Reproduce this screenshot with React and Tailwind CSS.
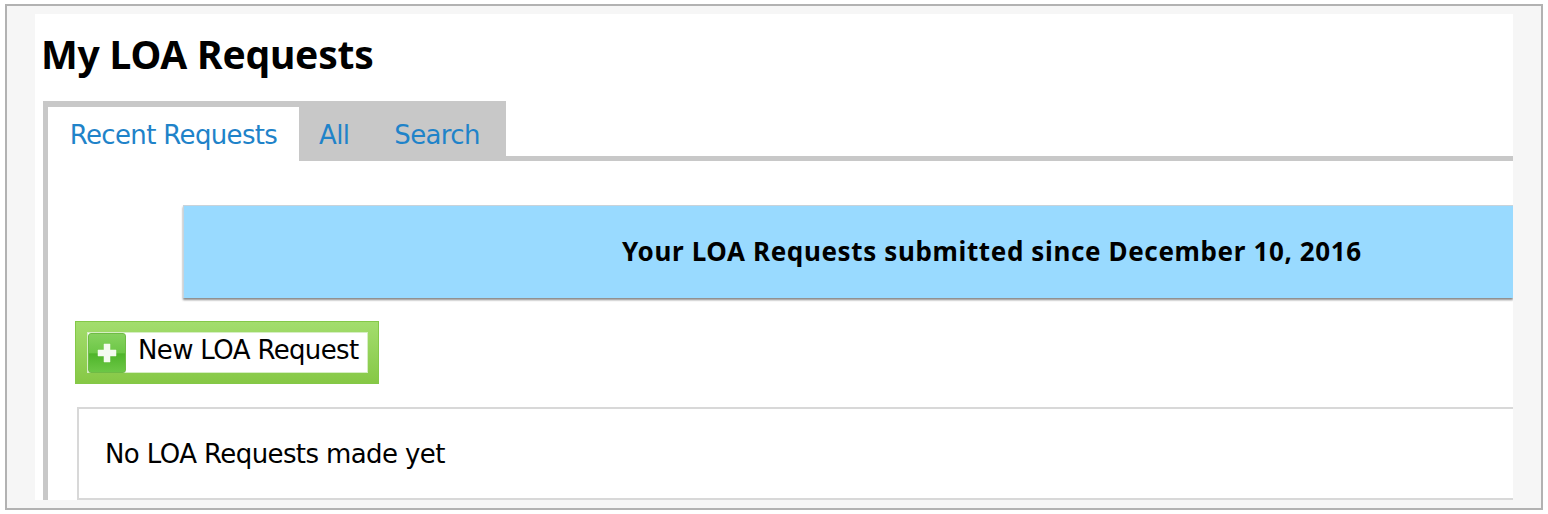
import React from "react";

const font = { fontFamily: '"Noto Sans", "DejaVu Sans", sans-serif' };
const bodyFont = { fontFamily: '"DejaVu Sans", "Noto Sans", sans-serif' };

function PlusIcon() {
  return (
    <div className="flex h-[40px] w-[38px] shrink-0 items-center justify-center rounded-[3px] border border-[#6fbb45] bg-[linear-gradient(to_bottom,#86d25e_0%,#6cc746_50%,#4fb52a_52%,#6cc746_100%)]">
      <svg width="20" height="20" viewBox="0 0 20 20">
        <path d="M7 1h6v6h6v6h-6v6H7v-6H1V7h6z" fill="#f4fbf0" stroke="#f4fbf0" strokeWidth="0.5" strokeLinejoin="round" />
      </svg>
    </div>
  );
}

export default function App() {
  return (
    <div
      className="h-[514px] w-[1548px] overflow-hidden bg-white px-[5px] pt-[4px] text-black"
      style={font}
    >
      <div className="h-[506px] w-[1538px] border-2 border-[#b2b2b2] bg-[#f6f6f6] px-[28px] py-[8px]">
        <div className="flex h-full flex-col overflow-hidden bg-white pl-[8px]">
          <h1 className="-ml-[2px] h-[87px] shrink-0 pt-[13px] text-[39px] leading-[54px] font-bold tracking-[-0.2px]">
            My LOA Requests
          </h1>

          <div className="flex-1 border-l-[5px] border-[#c8c8c8]">
            <div className="h-[60px] border-b-[5px] border-[#c8c8c8]">
              <div
                className="flex h-[55px] w-[458px] bg-[#c8c8c8] pt-[6px] text-[26px] tracking-[-0.65px] text-[#1f83c9]"
                style={bodyFont}
              >
                <div className="relative flex h-[55px] w-[251px] items-center justify-center bg-white pt-[2px]">
                  Recent Requests
                </div>
                <div className="flex h-[49px] items-center pt-[8px] pl-[20px]">All</div>
                <div className="flex h-[49px] items-center pt-[8px] pl-[45px]">Search</div>
              </div>
            </div>

            <div className="mt-[44px] ml-[135px] flex h-[93px] items-center border-t border-l border-[#c9d3da] bg-[#99daff] pb-[2px] pl-[438px] text-[26px] font-bold tracking-[0.63px] whitespace-nowrap shadow-[0_2px_2px_#8a8a8a]">
              Your LOA Requests submitted since December 10, 2016
            </div>

            <div className="mt-[23px] ml-[27px] flex h-[63px] w-[304px] items-center border border-[#84c848] bg-linear-to-b from-[#a3dd6d] to-[#86c845] pl-[11px]">
              <div className="flex h-[41px] w-[281px] items-center border border-[#d6eec4] bg-white">
                <PlusIcon />
                <span className="pb-[5px] pl-[12px] text-[26px] leading-none tracking-[-0.65px]" style={bodyFont}>
                  New LOA Request
                </span>
              </div>
            </div>

            <div
              className="mt-[23px] mr-[-4px] ml-[29px] flex h-[93px] items-center border-2 border-[#d8d8d8] pt-[2px] pl-[26px] text-[26px] tracking-[-0.6px]"
              style={bodyFont}
            >
              No LOA Requests made yet
            </div>
          </div>
        </div>
      </div>
    </div>
  );
}
